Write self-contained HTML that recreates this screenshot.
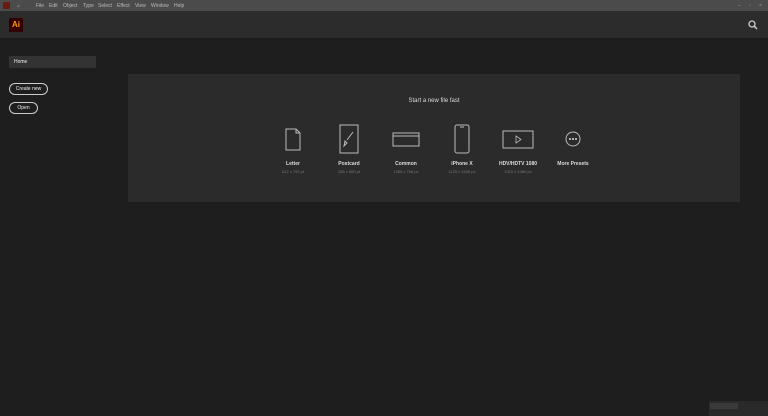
<!DOCTYPE html>
<html><head><style>
*{margin:0;padding:0;box-sizing:border-box}
body{width:768px;height:416px;background:#1e1e1e;font-family:"Liberation Sans",sans-serif;position:relative;overflow:hidden;color:#ddd}
.menu{position:absolute;left:0;top:0;width:768px;height:11px;background:#4b4b4b;font-size:5px;color:#bbb}
.menu span{position:absolute;top:3px}
.hdr{position:absolute;left:0;top:11px;width:768px;height:27px;background:#2c2c2c}
.logo{position:absolute;left:9px;top:18px;width:14px;height:14px;background:#330000;color:#ff9a00;font-size:8px;font-weight:bold;text-align:center;line-height:14px;border-radius:1px}
.home{position:absolute;left:9px;top:56px;width:87px;height:12px;background:#333;font-size:5px;line-height:12px;padding-left:5px;color:#eee}
.btn{position:absolute;left:9px;height:12px;border:1.3px solid #ccc;border-radius:7px;font-size:5px;line-height:10px;text-align:center;color:#eee}
.panel{position:absolute;left:128px;top:74px;width:612px;height:128px;background:#2b2b2b}
.title{position:absolute;top:24px;width:100%;text-align:center;font-size:6px;color:#ddd}
.item{position:absolute;top:50px;width:60px;text-align:center}
.item svg{display:block;margin:0 auto;height:30px}
.lbl{font-size:5px;color:#ddd;margin-top:7px;font-weight:bold}
.sub{font-size:4px;color:#777;margin-top:2px}
</style></head><body>
<div class="menu">
<div style="position:absolute;left:3px;top:2px;width:7px;height:7px;background:#6a1a10"></div>
<span style="left:17px">⌂</span>
<span style="left:36px">File</span><span style="left:49px">Edit</span><span style="left:63px">Object</span><span style="left:83px">Type</span><span style="left:98px">Select</span><span style="left:117px">Effect</span><span style="left:135px">View</span><span style="left:151px">Window</span><span style="left:174px">Help</span>
<span style="left:738px;color:#999">–</span><span style="left:749px;color:#999">▫</span><span style="left:759px;color:#999">×</span>
</div>
<div class="hdr"></div>
<div class="logo">Ai</div>
<svg style="position:absolute;left:748px;top:20px" width="10" height="10" viewBox="0 0 10 10"><circle cx="4" cy="4" r="3" fill="none" stroke="#ccc" stroke-width="1.3"/><line x1="6.2" y1="6.2" x2="9" y2="9" stroke="#ccc" stroke-width="1.5"/></svg>
<div class="home">Home</div>
<div class="btn" style="top:83px;width:39px">Create new</div>
<div class="btn" style="top:102px;width:29px">Open</div>
<div class="panel">
<div class="title">Start a new file fast</div>
<div class="item" style="left:135px"><svg viewBox="0 0 20 30" width="20"><path d="M3 5h10l4 4v17H3z M13 5v4h4" fill="none" stroke="#bbb" stroke-width="1"/></svg><div class="lbl">Letter</div><div class="sub">612 x 792 pt</div></div>
<div class="item" style="left:191px"><svg viewBox="0 0 24 30" width="24"><rect x="3" y="1" width="18" height="28" fill="none" stroke="#bbb" stroke-width="1"/><path d="M16 8l-6 8M8 17l2 2-3 3z" fill="none" stroke="#bbb" stroke-width="1"/></svg><div class="lbl">Postcard</div><div class="sub">288 x 560 pt</div></div>
<div class="item" style="left:248px"><svg viewBox="0 0 30 30" width="30"><rect x="2" y="9" width="26" height="13" fill="none" stroke="#bbb" stroke-width="1"/><line x1="2" y1="12" x2="28" y2="12" stroke="#bbb" stroke-width="1"/></svg><div class="lbl">Common</div><div class="sub">1366 x 768 px</div></div>
<div class="item" style="left:304px"><svg viewBox="0 0 20 30" width="20"><rect x="3" y="1" width="14" height="28" rx="2" fill="none" stroke="#bbb" stroke-width="1"/><line x1="8" y1="3" x2="12" y2="3" stroke="#bbb"/></svg><div class="lbl">iPhone X</div><div class="sub">1125 x 2436 px</div></div>
<div class="item" style="left:360px"><svg viewBox="0 0 34 30" width="34"><rect x="2" y="7" width="30" height="17" fill="none" stroke="#bbb" stroke-width="1"/><path d="M15 12l5 3.5-5 3.5z" fill="none" stroke="#bbb" stroke-width="0.8"/></svg><div class="lbl">HDV/HDTV 1080</div><div class="sub">1920 x 1080 px</div></div>
<div class="item" style="left:415px"><svg viewBox="0 0 20 30" width="20"><circle cx="10" cy="15" r="7" fill="none" stroke="#bbb" stroke-width="1"/><circle cx="7" cy="15" r="1" fill="#ddd"/><circle cx="10" cy="15" r="1" fill="#ddd"/><circle cx="13" cy="15" r="1" fill="#ddd"/></svg><div class="lbl">More Presets</div></div>
</div>
<div style="position:absolute;left:709px;top:401px;width:59px;height:15px;background:#2a2a2a"></div>
<div style="position:absolute;left:710px;top:403px;width:28px;height:6px;background:#3a3a3a"></div>
</body></html>
